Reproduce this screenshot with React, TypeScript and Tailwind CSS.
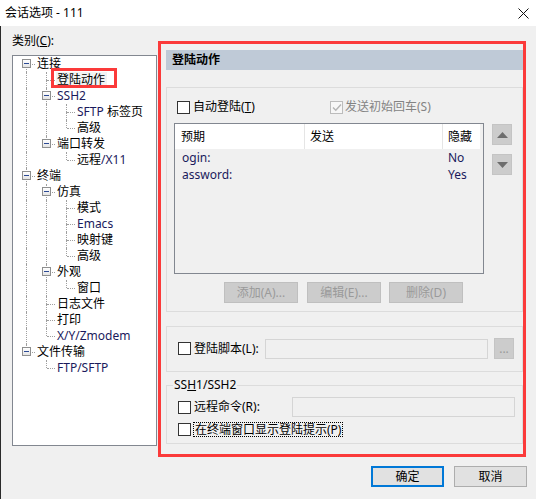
import React from "react";

type Node = { label: string; level: number; exp?: boolean; sel?: boolean; latin?: boolean };

const nodes: Node[] = [
  { label: "连接", level: 0, exp: true },
  { label: "登陆动作", level: 1, sel: true },
  { label: "SSH2", level: 1, exp: true, latin: true },
  { label: "SFTP 标签页", level: 2 },
  { label: "高级", level: 2 },
  { label: "端口转发", level: 1, exp: true },
  { label: "远程/X11", level: 2 },
  { label: "终端", level: 0, exp: true },
  { label: "仿真", level: 1, exp: true },
  { label: "模式", level: 2 },
  { label: "Emacs", level: 2, latin: true },
  { label: "映射键", level: 2 },
  { label: "高级", level: 2 },
  { label: "外观", level: 1, exp: true },
  { label: "窗口", level: 2 },
  { label: "日志文件", level: 1 },
  { label: "打印", level: 1 },
  { label: "X/Y/Zmodem", level: 1, latin: true },
  { label: "文件传输", level: 0, exp: true },
  { label: "FTP/SFTP", level: 1, latin: true },
];

function hasNext(k: number): boolean {
  const lv = nodes[k].level;
  for (let j = k + 1; j < nodes.length; j++) {
    if (nodes[j].level < lv) return false;
    if (nodes[j].level === lv) return true;
  }
  return false;
}

function ancestorHasNext(i: number, level: number): boolean {
  for (let j = i - 1; j >= 0; j--) {
    if (nodes[j].level === level) return hasNext(j);
    if (nodes[j].level < level) return false;
  }
  return false;
}

function Label({ text }: { text: string }) {
  const parts = text.split(/([A-Za-z0-9/ ]+)/).filter((p) => p.length > 0);
  return (
    <>
      {parts.map((p, i) =>
        /[A-Za-z0-9]/.test(p) ? (
          <span key={i} className="text-[#1a1a5c]">
            {p}
          </span>
        ) : (
          <span key={i}>{p}</span>
        )
      )}
    </>
  );
}

function TreeRow({ n, i }: { n: Node; i: number }) {
  const cols = [];
  for (let c = 0; c <= n.level; c++) {
    if (c < n.level) {
      cols.push(
        <div key={c} className="relative w-[20px] h-[16px] shrink-0">
          {ancestorHasNext(i, c) && (
            <div className="absolute left-[10px] top-0 h-[16px] border-l border-dotted border-[#a0a0a0]" />
          )}
        </div>
      );
    } else {
      const next = hasNext(i);
      cols.push(
        <div key={c} className="relative w-[20px] h-[16px] shrink-0">
          {i > 0 && <div className="absolute left-[10px] top-0 h-[8px] border-l border-dotted border-[#a0a0a0]" />}
          {next && <div className="absolute left-[10px] top-[8px] h-[8px] border-l border-dotted border-[#a0a0a0]" />}
          <div className="absolute left-[11px] top-[8px] w-[8px] border-t border-dotted border-[#a0a0a0]" />
          {n.exp && (
            <div className="absolute left-[6px] top-[3px] w-[9px] h-[9px] border border-[#8e8f8f] bg-gradient-to-b from-white to-[#e4e4e4] flex items-center justify-center">
              <div className="w-[5px] h-[1px] bg-[#2b4a94]" />
            </div>
          )}
        </div>
      );
    }
  }
  return (
    <div className="flex h-[16px] items-center">
      {cols}
      <span
        className={
          n.sel
            ? "relative ml-0 pl-[1px] pr-[2px] leading-[16px] bg-[#f3f3f3] whitespace-nowrap"
            : "relative ml-0 pl-[1px] pr-[2px] leading-[16px] whitespace-nowrap"
        }
      >
        <Label text={n.label} />
        {n.sel && (
          <span className="absolute left-[-5px] top-[-4px] w-[66px] h-[20px] border-[3px] border-[#fb3a3a]" />
        )}
      </span>
    </div>
  );
}

function Check({ checked, disabled }: { checked?: boolean; disabled?: boolean }) {
  return (
    <span
      className={
        disabled
          ? "w-[13px] h-[13px] border border-[#bcbcbc] bg-[#f7f7f7] flex items-center justify-center shrink-0"
          : "w-[13px] h-[13px] border border-[#333333] bg-white flex items-center justify-center shrink-0"
      }
    >
      {checked && (
        <svg width="10" height="9" viewBox="0 0 10 9">
          <path d="M1 4.5 L3.8 7.3 L9 1.5" stroke="#b4b4b4" strokeWidth="1.4" fill="none" />
        </svg>
      )}
    </span>
  );
}

function DisabledBtn({ text, cls }: { text: string; cls: string }) {
  return (
    <div
      className={
        "h-[21px] w-[74px] border border-[#bfbfbf] bg-[#cccccc] text-[#9a9a9a] flex items-center justify-center leading-[16px] " +
        cls
      }
    >
      {text}
    </div>
  );
}

export default function App() {
  return (
    <div className="w-[536px] h-[499px] bg-[#f0f0f0] flex flex-col text-[12px] text-black font-['Noto_Sans','Noto_Sans_CJK_SC',sans-serif] overflow-hidden">
      {/* title bar */}
      <div className="h-[26px] bg-white flex items-center justify-between pl-[5px] pr-[7px] shrink-0">
        <span className="leading-[16px] text-[12px]">会话选项 - 111</span>
        <svg width="11" height="11" viewBox="0 0 11 11">
          <path d="M0.5 0.5 L10.5 10.5 M10.5 0.5 L0.5 10.5" stroke="#111" strokeWidth="1" />
        </svg>
      </div>

      <div className="flex-1 border-l border-[#2a2a2a] flex flex-col">
        <div className="flex pl-[11px]">
          {/* left */}
          <div className="w-[145px] pt-[7px] flex flex-col">
            <div className="h-[16px] leading-[16px]">
              类别(<span className="underline">C</span>):
            </div>
            <div className="mt-[6px] h-[391px] w-[145px] border border-[#828790] bg-white pl-[3px]">
              {nodes.map((n, i) => (
                <TreeRow key={i} n={n} i={i} />
              ))}
            </div>
          </div>

          {/* right red box */}
          <div className="ml-[1px] mt-[15px] w-[368px] h-[416px] border-[3px] border-[#fb3a3a] pl-[5px] pt-[6px] flex flex-col">
            <div className="h-[20px] bg-[#bfcad7] pl-[6px] leading-[20px] font-bold">登陆动作</div>

            {/* group 1 */}
            <div className="mt-[17px] h-[225px] border border-[#dcdcdc] pt-[11px] flex flex-col">
              <div className="flex items-center h-[16px] pl-[10px]">
                <div className="w-[153px] flex items-center">
                  <Check />
                  <span className="ml-[3px] leading-[16px]">
                    自动登陆(<span className="underline">T</span>)
                  </span>
                </div>
                <Check checked disabled />
                <span className="ml-[2px] leading-[16px] text-[#838383]">发送初始回车(S)</span>
              </div>

              <div className="mt-[8px] flex pl-[7px]">
                <div className="w-[310px] h-[151px] border border-[#828790] bg-[#f0f0f0] flex flex-col">
                  <div className="h-[25px] flex shrink-0">
                    <div className="w-[129px] bg-white pl-[6px] leading-[25px]">预期</div>
                    <div className="w-[1px] bg-[#e5e5e5]" />
                    <div className="w-[137px] bg-white pl-[5px] leading-[25px]">发送</div>
                    <div className="w-[1px] bg-[#e5e5e5]" />
                    <div className="w-[37px] bg-white pl-[5px] leading-[25px]">隐藏</div>
                    <div className="flex-1" />
                  </div>
                  {[
                    ["ogin:", "No"],
                    ["assword:", "Yes"],
                  ].map(([a, b], i) => (
                    <div key={i} className="h-[17px] flex items-center text-[#1a1a5c]">
                      <div className="w-[268px] pl-[7px] leading-[17px]">{a}</div>
                      <div className="pl-[5px] leading-[17px]">{b}</div>
                    </div>
                  ))}
                </div>
                <div className="ml-[8px] flex flex-col pt-[1px] gap-[9px]">
                  <div className="w-[20px] h-[21px] bg-[#cccccc] border border-[#c4c4c4] flex items-center justify-center">
                    <svg width="11" height="6" viewBox="0 0 11 6">
                      <path d="M0 6 L5.5 0 L11 6 Z" fill="#6d6d6d" />
                    </svg>
                  </div>
                  <div className="w-[20px] h-[21px] bg-[#cccccc] border border-[#c4c4c4] flex items-center justify-center">
                    <svg width="11" height="6" viewBox="0 0 11 6">
                      <path d="M0 0 L11 0 L5.5 6 Z" fill="#6d6d6d" />
                    </svg>
                  </div>
                </div>
              </div>

              <div className="mt-[8px] flex">
                <DisabledBtn text="添加(A)..." cls="ml-[57px]" />
                <DisabledBtn text="编辑(E)..." cls="ml-[9px]" />
                <DisabledBtn text="删除(D)" cls="ml-[8px]" />
              </div>
            </div>

            {/* group 2 */}
            <div className="mt-[14px] h-[46px] border border-[#dcdcdc] pt-[11px] pl-[11px]">
              <div className="flex items-center h-[21px]">
                <div className="w-[87px] flex items-center">
                  <Check />
                  <span className="ml-[3px] leading-[16px]">登陆脚本(L):</span>
                </div>
                <div className="w-[223px] h-[20px] border border-[#d5d5d5] bg-[#f0f0f0]" />
                <div className="ml-[6px] w-[20px] h-[21px] bg-[#cccccc] border border-[#c4c4c4] text-[#9a9a9a] flex items-center justify-center leading-[12px]">
                  ...
                </div>
              </div>
            </div>

            {/* group 3 */}
            <fieldset className="mt-[5px] border border-[#dcdcdc] pb-[5px]">
              <legend className="ml-[6px] px-[1px] leading-[16px]">
                SS<span className="underline">H</span>1/SSH2
              </legend>
              <div className="mt-[4px] flex items-center h-[20px] pl-[11px]">
                <div className="w-[114px] flex items-center">
                  <Check />
                  <span className="ml-[3px] leading-[16px]">远程命令(R):</span>
                </div>
                <div className="w-[223px] h-[20px] border border-[#d5d5d5] bg-[#f0f0f0]" />
              </div>
              <div className="mt-[4px] flex items-center h-[17px] pl-[11px]">
                <Check />
                <span className="ml-[2px] border border-dotted border-black leading-[13px] pl-[1px] pr-[1px]">
                  在终端窗口显示登陆提示(P)
                </span>
              </div>
            </fieldset>
          </div>
        </div>

        {/* bottom buttons */}
        <div className="mt-[9px] flex justify-end pr-[9px] gap-[10px]">
          <div className="w-[73px] h-[21px] border-2 border-[#0078d7] bg-[#e1e1e1] flex items-center justify-center leading-[16px]">
            确定
          </div>
          <div className="w-[73px] h-[21px] border border-[#adadad] bg-[#e1e1e1] flex items-center justify-center leading-[16px]">
            取消
          </div>
        </div>
      </div>
    </div>
  );
}
